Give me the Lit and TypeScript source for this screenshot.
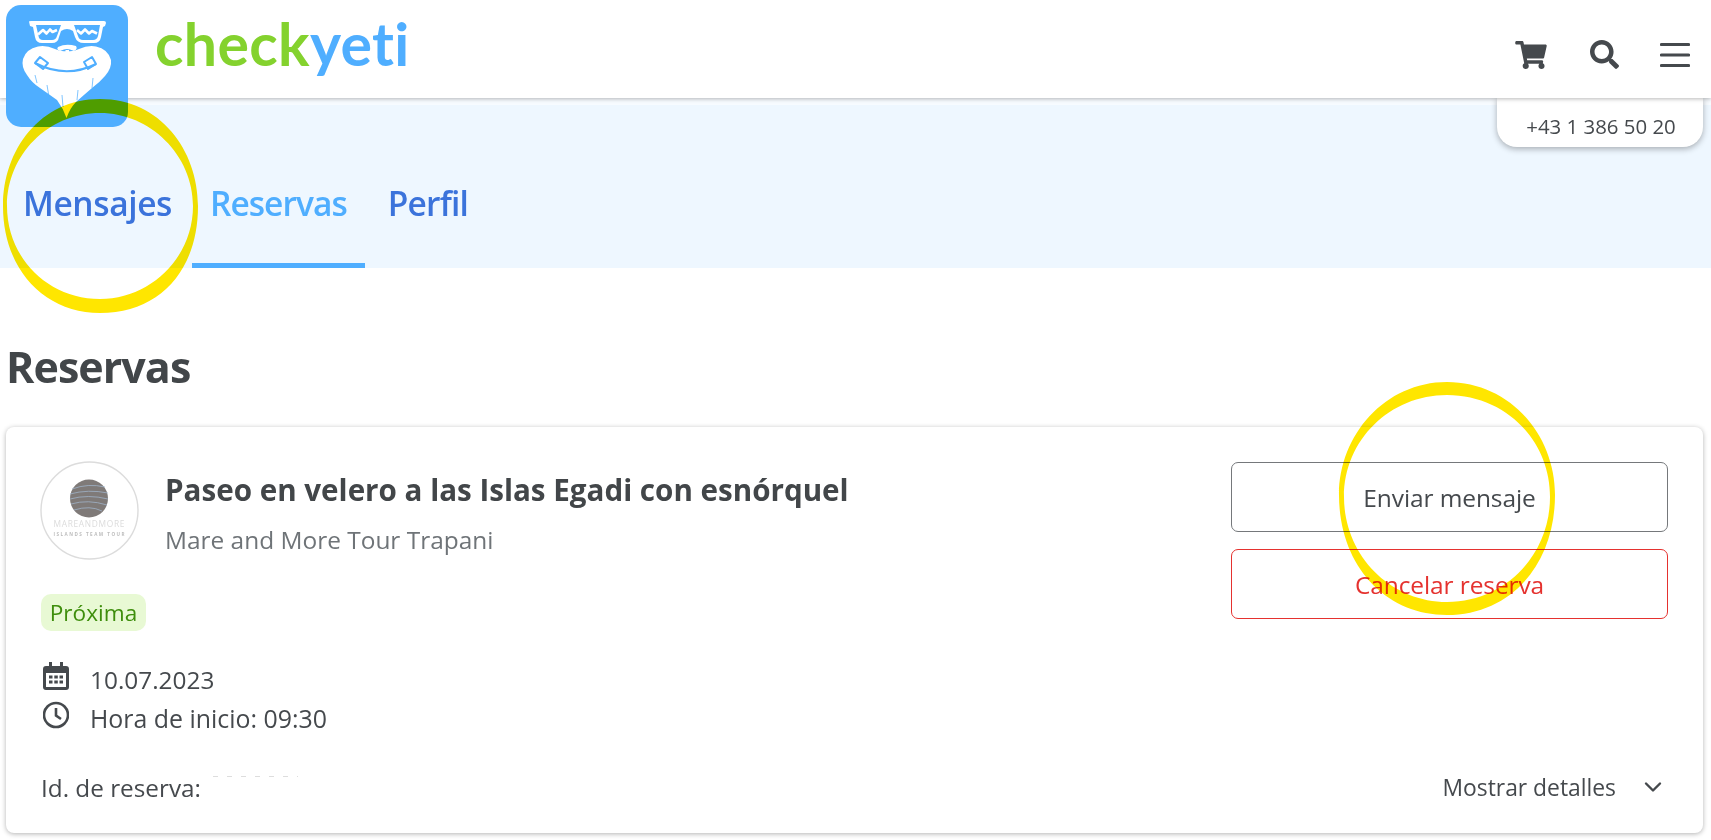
import { LitElement, html, css, svg } from "lit";
import { customElement } from "lit/decorators.js";

const logo = svg`
<rect x="6" y="5" width="122" height="122" rx="15" fill="#4FAEFF"/>
<path d="M29 21.500 Q29 21 31 21 L104 21 Q106 21 106 23 L105 26 L103 27 L101 37 Q100 43 94 43 L84 43 Q77 43 75 37 L73 31 Q67 27 61 31 L59 37 Q58 43 52 43 L42 43 Q36 43 35 37 L33 27 L30 26 Z" fill="#fff"/>
<path d="M36 25 L61 25 L57 36 Q56 40 52 40 L43 40 Q39 40 38.500 36 Z M74 25 L100 25 L98 36 Q97 40 93 40 L83 40 Q79 40 78 36 Z" fill="#4FAEFF"/>
<path d="M38 34.500 L43 30 L46.500 33.500 L50 29.500 L52.500 32 L57 30 M77 30 L81 33.500 L85 29.500 L89 33.500 L92 31 L97 33.500" stroke="#fff" stroke-width="2.600" fill="none" stroke-linejoin="round"/>
<path d="M58 47 Q66 43 76 46 Q78 49 74 51 L70 49.500 Q67 48.500 64 49.500 L60 51 Q56 49.500 58 47 Z M65.500 50 h3.500 v2 h-3.500Z" fill="#fff"/>
<path d="M67 51 Q73 52 79 49 Q88 45 96 46.500 Q108 49 111 60 Q112 68 105 76 Q100 82 92 88 Q85 94 76 102 Q70 108 66.500 118 Q63 108 57 100 Q50 95 40 88 Q32 83 27 75 Q21 67 23 59 Q26 49 38 46.500 Q46 45 55 49 Q61 52 67 51 Z" fill="#fff"/>
<path d="M40 57 L48 63 L43 69 L35 63 Z M92 57 L96 64 L88 69 L84 62 Z" fill="none" stroke="#4FAEFF" stroke-width="2" stroke-linejoin="round"/>
<path d="M35 63 Q66 79 96 64" fill="none" stroke="#4FAEFF" stroke-width="2.200"/>
<path d="M35 75 L37 83 M47 85 L49 97 M62 95 L63 107 M78 90 L77 100 M93 78 L92 88" stroke="#4FAEFF" stroke-width=".9" fill="none" opacity=".8"/>`;

const cart = svg`<path d="M528.12 301.319l47.273-208C578.806 78.301 567.391 64 551.99 64H159.208l-9.166-44.81C147.758 8.021 137.93 0 126.529 0H24C10.745 0 0 10.745 0 24v16c0 13.255 10.745 24 24 24h69.883l70.248 343.435C147.325 417.1 136 435.222 136 456c0 30.928 25.072 56 56 56s56-25.072 56-56c0-15.674-6.447-29.835-16.824-40h209.647C430.447 426.165 424 440.326 424 456c0 30.928 25.072 56 56 56s56-25.072 56-56c0-22.172-12.888-41.332-31.579-50.405l5.517-24.276c3.413-15.018-8.002-29.319-23.403-29.319H218.117l-6.545-32h293.145c11.206 0 20.92-7.754 23.403-18.681z"/>`;
const search = svg`<path d="M505 442.7L405.3 343c-4.5-4.5-10.6-7-17-7H372c27.6-35.3 44-79.7 44-128C416 93.1 322.9 0 208 0S0 93.1 0 208s93.1 208 208 208c48.3 0 92.7-16.4 128-44v16.3c0 6.4 2.5 12.5 7 17l99.7 99.7c9.4 9.4 24.6 9.4 33.9 0l28.3-28.3c9.4-9.4 9.4-24.6.1-34zM208 336c-70.7 0-128-57.2-128-128 0-70.7 57.2-128 128-128 70.7 0 128 57.2 128 128 0 70.7-57.2 128-128 128z"/>`;

@customElement("app-root")
export class AppRoot extends LitElement {
  static styles = css`
    :host { display: block; position: relative; height: 840px; overflow: hidden; background: #fff;
      font-family: "Open Sans", "Noto Sans", sans-serif; color: #45494d; }
    .top { position: relative; z-index: 3; height: 98px; background: #fff; display: flex; align-items: flex-start;
      box-shadow: 0 1px 4px rgba(0,0,0,.28); padding: 5px 21px 0 6px; box-sizing: border-box; }
    .logo { width: 122px; height: 122px; flex: none; display: block; }
    .brand { margin: 3px 0 0 27px; font-family: Lato, sans-serif; font-weight: 700; font-size: 59px; line-height: 72px; color: #84D22E; letter-spacing: .35px; }
    .brand span { color: #4FAEFF; }
    .icons { margin-left: auto; display: flex; align-items: center; padding-top: 35px; }
    .icons svg { display: block; fill: #45494d; }
    .cart { width: 32px; height: 28px; margin-right: 43px; }
    .search { width: 29px; height: 29px; margin-right: 41px; }
    .burger { width: 30px; height: 26px; }
    .strip { height: 7px; background: #f7fbff; }
    .band { position: relative; height: 163px; background: #EEF7FF; display: flex; align-items: stretch; padding-left: 5px; }
    .phone { position: absolute; z-index: 2; top: -8px; right: 8px; width: 206px; height: 50px; box-sizing: border-box; background: #fff;
      border-radius: 0 0 20px 20px; box-shadow: 0 2px 6px rgba(0,0,0,.3); text-align: center; font-size: 20.4px; line-height: 26px; padding: 16px 0 0 2px; }
    .tab { font-size: 33.5px; font-weight: 600; letter-spacing: -.8px; color: #3B73DB; padding: 78px 18px 0; line-height: 40px; box-sizing: border-box; margin-right: 4px; }
    .tab.first { letter-spacing: -.4px; padding-right: 16px; }
    .tab.on { color: #4FAEFF; border-bottom: 5px solid #4FAEFF; letter-spacing: -.95px; margin-right: 5px; }
    h1 { margin: 0; padding: 71px 0 0 6px; font-size: 43px; line-height: 56px; font-weight: 700; letter-spacing: -.95px; color: #424649; }
    .card { margin: 32px 8px 0 6px; height: 406px; box-sizing: border-box; border-radius: 8px; background: #fff;
      box-shadow: 0 1px 5px rgba(0,0,0,.3); padding: 34px 35px 0 34px; display: flex; flex-direction: column; }
    .head { display: flex; align-items: flex-start; height: 133px; }
    .avatar { width: 99px; height: 99px; flex: none; display: block; }
    .titles { margin-left: 26px; flex: 1; }
    .title { font-size: 29.6px; line-height: 40px; font-weight: 700; color: #424649; margin-top: 9px; }
    .sub { font-size: 24.45px; line-height: 30px; color: #6f7478; margin-top: 15px; }
    .btns { width: 437px; flex: none; display: flex; flex-direction: column; gap: 17px; margin-top: 1px; }
    .btn { height: 70px; box-sizing: border-box; border: 1px solid #75787b; border-radius: 7px; display: flex; align-items: center; justify-content: center; font-size: 24.5px; letter-spacing: -.1px; }
    .btn.red { border-color: #E5322F; color: #E5322F; }
    .badge { align-self: flex-start; height: 37px; width: 105px; margin-left: 1px; box-sizing: border-box; background: #E8F9D4; color: #3E8E0C; border-radius: 10px; display: flex; align-items: center; justify-content: center; font-size: 22.6px; }
    .row { display: flex; align-items: center; height: 38.5px; font-size: 24.4px; padding-left: 1px; }
    .row svg { width: 26px; height: 28px; margin: -6px 21px 0 2px; flex: none; display: block; }
    .rows { margin-top: 29px; }
    .hora { font-size: 24.9px; }
    .foot { display: flex; align-items: center; justify-content: space-between; font-size: 24.3px; margin-top: 30px; height: 40px; padding-left: 1px; }
    .idl { display: flex; align-items: center; }
    .spec { width: 85px; height: 1px; margin: 0 0 22px 12px; background: repeating-linear-gradient(90deg, #ddd 0 5px, #fff 5px 14px); }
    .more { display: flex; align-items: center; font-size: 22.85px; }
    .more svg { width: 18px; height: 12px; margin: 0 6px 0 28px; display: block; }
    .mark { position: absolute; z-index: 5; left: 0; top: 0; width: 1711px; height: 840px; mix-blend-mode: multiply; pointer-events: none; }
  `;

  render() {
    return html`
      <div class="top">
        <svg class="logo" viewBox="6 5 122 122">${logo}</svg>
        <div class="brand">check<span>yeti</span></div>
        <div class="icons">
          <svg class="cart" viewBox="0 0 576 512">${cart}</svg>
          <svg class="search" viewBox="0 0 512 512">${search}</svg>
          <svg class="burger" viewBox="0 0 30 26"><path d="M1.500 2.500h27M1.500 13h27M1.500 23.500h27" stroke="#45494d" stroke-width="3.200" stroke-linecap="round" fill="none"/></svg>
        </div>
      </div>
      <div class="strip"></div>
      <div class="band">
        <div class="phone">+43 1 386 50 20</div>
        <div class="tab first">Mensajes</div>
        <div class="tab on">Reservas</div>
        <div class="tab">Perfil</div>
      </div>
      <h1>Reservas</h1>
      <div class="card">
        <div class="head">
          <svg class="avatar" viewBox="0 0 99 99">
            <circle cx="49.500" cy="49.500" r="48.500" fill="#fff" stroke="#dcdcdc" stroke-width="1.400"/>
            <circle cx="49" cy="37.500" r="19" fill="#7f7a78"/>
            <path d="M32 28 Q48 22 65 26 M30 33 Q48 28 68 32 M30 38 Q48 33 68 38 M31 43 Q48 38 67 44 M34 49 Q50 44 62 50" stroke="#9fb3c8" stroke-width=".8" fill="none"/>
            <text x="49" y="66" text-anchor="middle" font-family="Open Sans" font-size="8.400" fill="#dcdcdc" textLength="71">MAREANDMORE</text>
            <text x="49" y="74.500" text-anchor="middle" font-family="Open Sans" font-weight="700" font-size="4.600" fill="#bdbdbd" textLength="71">ISLANDS TEAM TOUR</text>
          </svg>
          <div class="titles">
            <div class="title">Paseo en velero a las Islas Egadi con esnórquel</div>
            <div class="sub">Mare and More Tour Trapani</div>
          </div>
          <div class="btns">
            <div class="btn">Enviar mensaje</div>
            <div class="btn red">Cancelar reserva</div>
          </div>
        </div>
        <div class="badge">Próxima</div>
        <div class="rows">
          <div class="row">
            <svg viewBox="0 0 26 28"><path d="M6 0h3v4H17V0h3v4h3q3 0 3 3v18q0 3-3 3H3q-3 0-3-3V7q0-3 3-3h3Z M3 11v14h20V11Z" fill="#45494d" fill-rule="evenodd"/><path d="M6 13.500h3.500v3H6Zm5.300 0h3.500v3h-3.500Zm5.200 0H20v3h-3.500ZM6 18.500h3.500v3H6Zm5.300 0h3.500v3h-3.500Zm5.200 0H20v3h-3.500Z" fill="#45494d"/></svg>
            <span>10.07.2023</span>
          </div>
          <div class="row">
            <svg viewBox="0 0 26 28"><circle cx="13" cy="14" r="12" fill="none" stroke="#45494d" stroke-width="2.600"/><path d="M13 7v7.500l5 3.500" fill="none" stroke="#45494d" stroke-width="2.600"/></svg>
            <span class="hora">Hora de inicio: 09:30</span>
          </div>
        </div>
        <div class="foot">
          <div class="idl"><span>Id. de reserva:</span><span class="spec"></span></div>
          <div class="more"><span>Mostrar detalles</span>
            <svg viewBox="0 0 18 12"><path d="M2 2.500l7 7 7-7" fill="none" stroke="#45494d" stroke-width="2.400" stroke-linecap="round" stroke-linejoin="round"/></svg>
          </div>
        </div>
      </div>
      <svg class="mark" viewBox="0 0 1711 840">
        <path fill="#FFE600" fill-rule="evenodd" d="M100 99C160 99 198 150 198 206C198 270 160 313 100 313C45 313 3 270 3 206C3 150 40 99 100 99ZM100 113C48 113 7 155 7 206C7 258 48 299 100 299C150 299 193 258 193 206C193 155 150 113 100 113Z"/>
        <path fill="#FFE600" fill-rule="evenodd" d="M1447 382C1510 382 1555 435 1555 495C1555 565 1510 615 1447 615C1385 615 1339 565 1339 495C1339 435 1385 382 1447 382ZM1447 395C1390 395 1344 440 1344 497C1344 555 1390 602 1447 602C1505 602 1550 555 1550 497C1550 440 1505 395 1447 395Z"/>
      </svg>
    `;
  }
}
